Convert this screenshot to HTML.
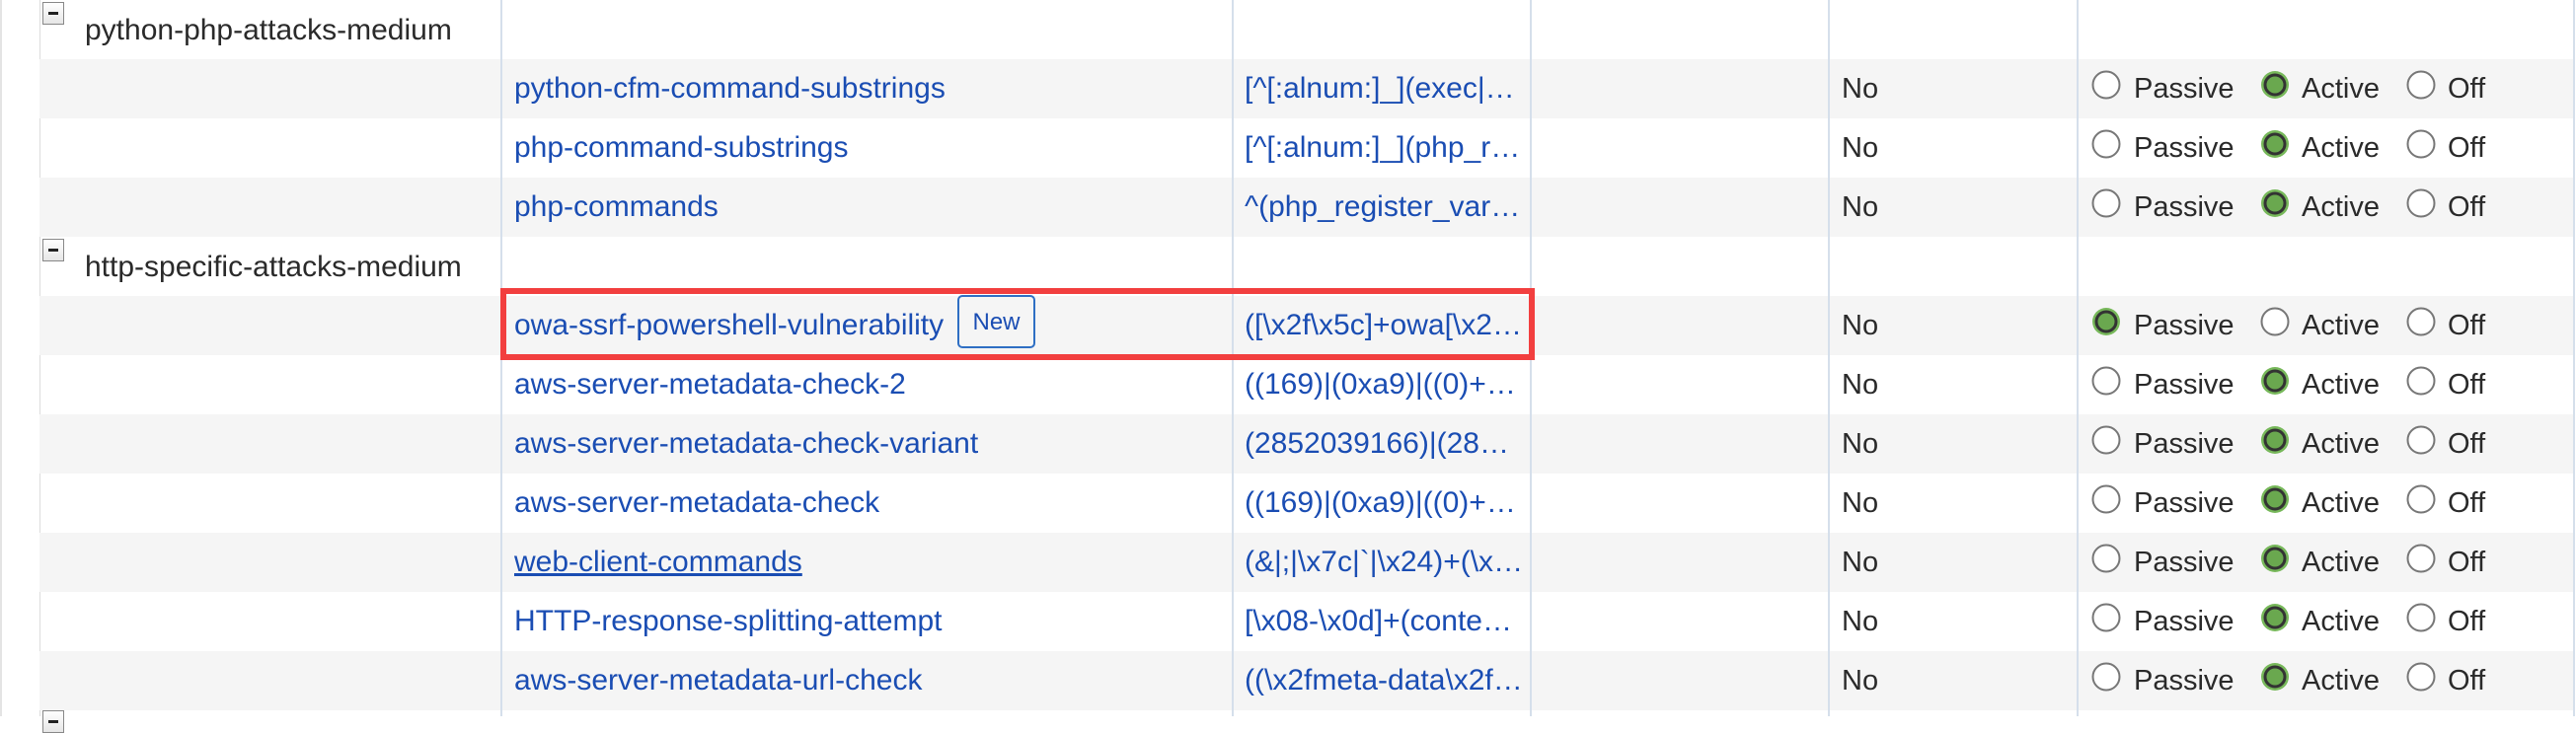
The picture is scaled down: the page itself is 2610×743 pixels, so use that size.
<!DOCTYPE html>
<html><head><style>
body{margin:0;width:2610px;height:726px;overflow:hidden;background:#fff;font-family:"Liberation Sans",Arial,sans-serif;position:relative}
.row{position:absolute;left:40px;width:2567px;height:60px}
.g{background:#f5f5f5}
.vl{position:absolute;top:0;height:726px;width:2px;background:#d5dfeb}
.t{position:absolute;font-size:29px;white-space:nowrap;line-height:34px}
.lk{color:#1a4db3;font-size:30px}
.dk{color:#2a2a2a}
.gl{font-size:30px}
.rx{width:283px;overflow:hidden;text-overflow:ellipsis}
.minus{position:absolute;left:43px;width:22px;height:23px;border:1px solid #888;box-sizing:border-box;background:linear-gradient(#fff,#e6e6e6)}
.minus:after{content:"";position:absolute;left:5px;top:9px;width:10px;height:3px;background:#222}
svg{position:absolute}
</style></head><body>
<div style="position:absolute;left:0;top:0;width:2px;height:726px;background:#e4e4e4"></div>
<div style="position:absolute;left:40px;top:0;width:1px;height:726px;background:#ddd"></div>
<div class="row g" style="top:60px"></div>
<div class="row g" style="top:180px"></div>
<div class="row g" style="top:300px"></div>
<div class="row g" style="top:420px"></div>
<div class="row g" style="top:540px"></div>
<div class="row g" style="top:660px"></div>
<div class="vl" style="left:507px"></div>
<div class="vl" style="left:1248px"></div>
<div class="vl" style="left:1550px"></div>
<div class="vl" style="left:1852px"></div>
<div class="vl" style="left:2104px"></div>
<div class="vl" style="left:2607px"></div>

<div class="minus" style="top:2px"></div>
<div class="t dk gl" style="left:86px;top:14px">python-php-attacks-medium</div>
<div class="minus" style="top:242px"></div>
<div class="t dk gl" style="left:86px;top:254px">http-specific-attacks-medium</div>
<div class="minus" style="top:720px"></div>

<div class="t lk" style="left:521px;top:73px">python-cfm-command-substrings</div>
<div class="t lk" style="left:521px;top:133px">php-command-substrings</div>
<div class="t lk" style="left:521px;top:193px">php-commands</div>
<div class="t lk" style="left:521px;top:313px">owa-ssrf-powershell-vulnerability</div>
<div style="position:absolute;left:970px;top:299px;width:79px;height:54px;border:2px solid #2f6fc4;border-radius:5px;box-sizing:border-box;color:#1a4db3;font-size:24px;line-height:52px;text-align:center">New</div>
<div class="t lk" style="left:521px;top:373px">aws-server-metadata-check-2</div>
<div class="t lk" style="left:521px;top:433px">aws-server-metadata-check-variant</div>
<div class="t lk" style="left:521px;top:493px">aws-server-metadata-check</div>
<div class="t lk" style="left:521px;top:553px;text-decoration:underline">web-client-commands</div>
<div class="t lk" style="left:521px;top:613px">HTTP-response-splitting-attempt</div>
<div class="t lk" style="left:521px;top:673px">aws-server-metadata-url-check</div>

<div class="t lk rx" style="left:1261px;top:73px">[^[:alnum:]_](exec|system|passthru)</div>
<div class="t lk rx" style="left:1261px;top:133px">[^[:alnum:]_](php_register_variables)</div>
<div class="t lk rx" style="left:1261px;top:193px">^(php_register_variables)</div>
<div class="t lk rx" style="left:1261px;top:313px">([\x2f\x5c]+owa[\x2f\x5c])</div>
<div class="t lk rx" style="left:1261px;top:373px">((169)|(0xa9)|((0)+251))</div>
<div class="t lk rx" style="left:1261px;top:433px">(2852039166)|(2852039166)</div>
<div class="t lk rx" style="left:1261px;top:493px">((169)|(0xa9)|((0)+251))</div>
<div class="t lk rx" style="left:1261px;top:553px">(&amp;|;|\x7c|`|\x24)+(\x28)</div>
<div class="t lk rx" style="left:1261px;top:613px">[\x08-\x0d]+(content-type)</div>
<div class="t lk rx" style="left:1261px;top:673px">((\x2fmeta-data\x2f)(.*))</div>

<div style="position:absolute;left:507px;top:292px;width:1048px;height:73px;border:6px solid #f23f3f;box-sizing:border-box"></div>

<svg width="0" height="0"><defs>
<g id="on"><circle cx="15" cy="15" r="14" fill="#77b85a"/><circle cx="15" cy="15" r="10" fill="#6aa84f" stroke="#333" stroke-width="3"/></g>
<g id="off"><circle cx="15" cy="15" r="13.5" fill="#fff" stroke="#777" stroke-width="2"/></g>
</defs></svg>

<div id="radios"></div>
<script>
var rows=[[90,1],[150,1],[210,1],[330,0],[390,1],[450,1],[510,1],[570,1],[630,1],[690,1]];
var h="";
rows.forEach(function(r){var c=r[0],s=r[1];
h+='<div class="t dk" style="left:1866px;top:'+(c-17)+'px">No</div>';
var xs=[2119,2290,2438];
xs.forEach(function(x,i){h+='<svg style="left:'+x+'px;top:'+(c-19)+'px" width="30" height="30"><use href="#'+(i==s?'on':'off')+'"/></svg>';});
h+='<div class="t dk" style="left:2162px;top:'+(c-17)+'px">Passive</div>';
h+='<div class="t dk" style="left:2332px;top:'+(c-17)+'px">Active</div>';
h+='<div class="t dk" style="left:2480px;top:'+(c-17)+'px">Off</div>';});
document.getElementById("radios").innerHTML=h;
</script>
</body></html>
